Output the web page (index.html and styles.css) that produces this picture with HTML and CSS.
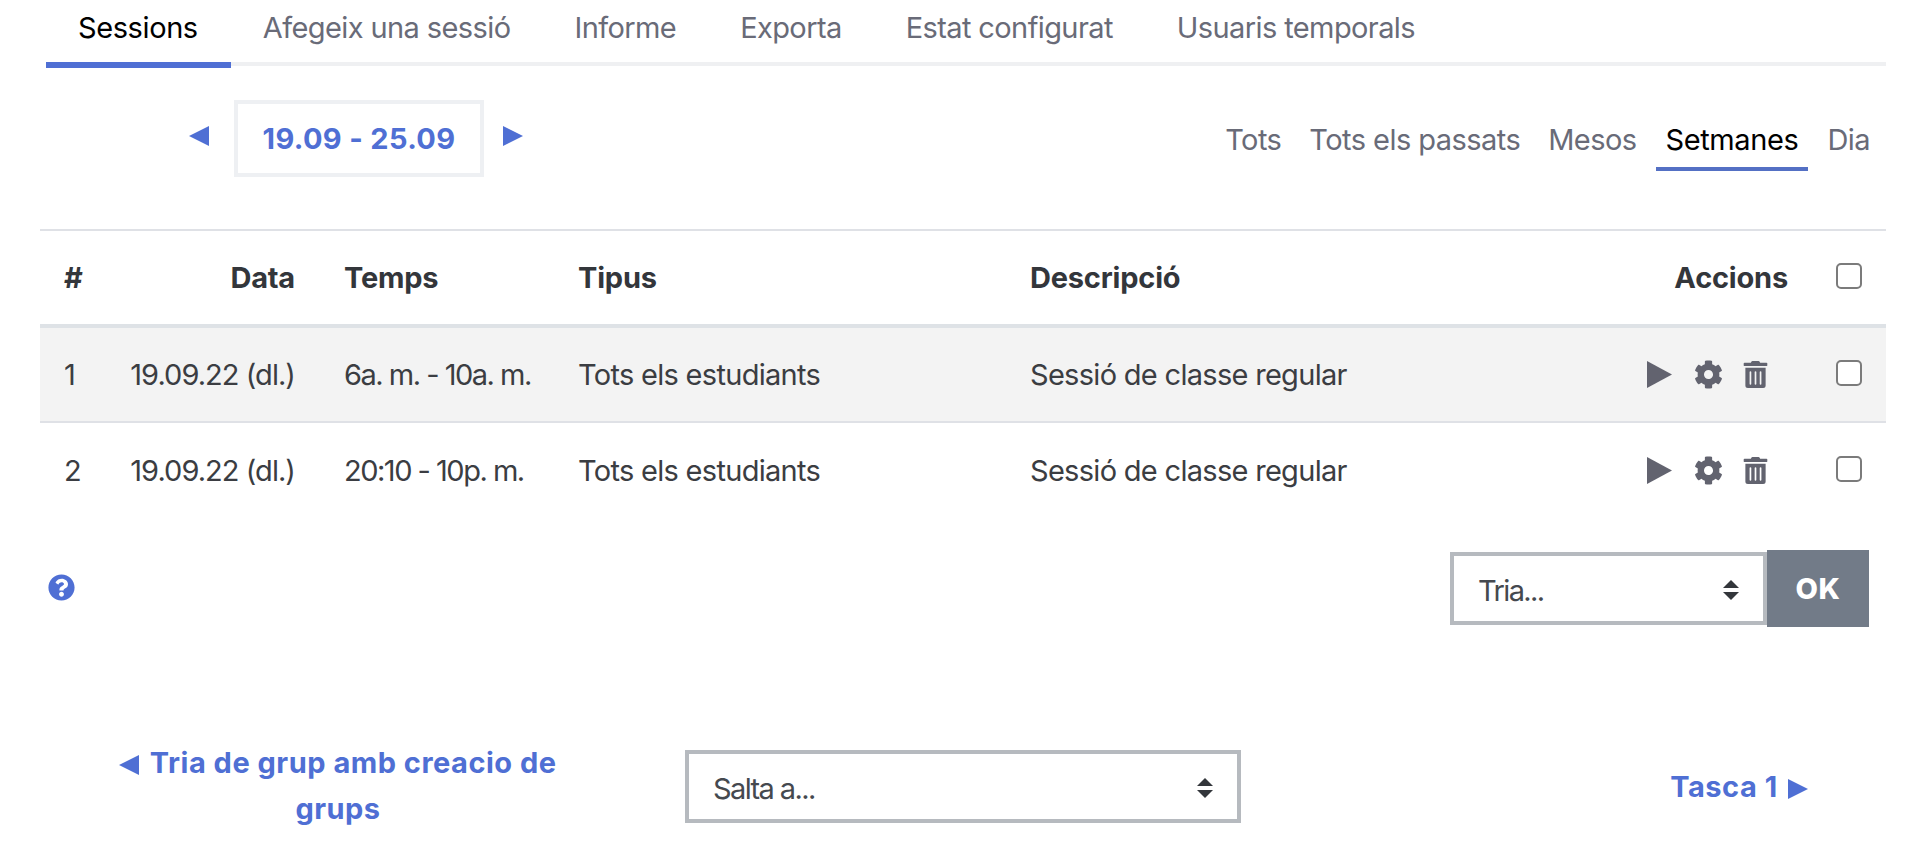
FILE: index.html
```html
<!DOCTYPE html>
<html lang="ca">
<head>
<meta charset="utf-8">
<title>Sessions</title>
<link rel="stylesheet" href="styles.css">
</head>
<body>
<main class="page">
  <nav class="tabs">
    <a class="tab active">Sessions</a>
    <a class="tab">Afegeix una sessió</a>
    <a class="tab">Informe</a>
    <a class="tab">Exporta</a>
    <a class="tab">Estat configurat</a>
    <a class="tab">Usuaris temporals</a>
  </nav>
  <section class="controls">
    <div class="pager">
      <svg class="arrow" viewBox="0 0 20 20"><path d="M20 0V20L0 10Z"/></svg>
      <div class="range">19.09 - 25.09</div>
      <svg class="arrow" viewBox="0 0 20 20"><path d="M0 0V20L20 10Z"/></svg>
    </div>
    <div class="views">
      <a class="view">Tots</a>
      <a class="view">Tots els passats</a>
      <a class="view">Mesos</a>
      <a class="view current">Setmanes</a>
      <a class="view">Dia</a>
    </div>
  </section>
  <table class="sessions">
    <thead>
      <tr>
        <th class="c-num">#</th>
        <th class="c-date">Data</th>
        <th class="c-time">Temps</th>
        <th class="c-type">Tipus</th>
        <th class="c-desc">Descripció</th>
        <th class="c-act">Accions</th>
        <th class="c-check"><span class="box"></span></th>
      </tr>
    </thead>
    <tbody>
      <tr class="odd">
        <td class="c-num">1</td>
        <td class="c-date">19.09.22 (dl.)</td>
        <td class="c-time">6a. m. - 10a. m.</td>
        <td class="c-type">Tots els estudiants</td>
        <td class="c-desc">Sessió de classe regular</td>
        <td class="c-act"><div class="icons">
          <svg class="i-play" viewBox="0 0 25 27"><path d="M0 0L25 13.5L0 27Z"/></svg>
          <svg class="i-gear" viewBox="0 0 512 512"><path d="M487.4 315.7l-42.6-24.6c4.300-23.200 4.300-47 0-70.200l42.600-24.600c4.900-2.800 7.100-8.600 5.500-14-11.100-35.600-30-67.800-54.700-94.600-3.800-4.100-10-5.100-14.800-2.300L380.800 110c-17.900-15.400-38.500-27.300-60.800-35.100V25.800c0-5.600-3.900-10.500-9.400-11.700-36.700-8.200-74.300-7.800-109.200 0-5.500 1.200-9.400 6.100-9.400 11.700V75c-22.200 7.900-42.800 19.800-60.800 35.100L88.700 85.500c-4.900-2.800-11-1.900-14.800 2.300-24.700 26.700-43.600 58.900-54.700 94.600-1.700 5.400.600 11.200 5.500 14L67.300 221c-4.300 23.200-4.300 47 0 70.200l-42.600 24.600c-4.900 2.800-7.100 8.600-5.500 14 11.100 35.600 30 67.800 54.700 94.600 3.800 4.100 10 5.100 14.800 2.300l42.600-24.600c17.900 15.400 38.500 27.300 60.800 35.100v49.200c0 5.600 3.900 10.500 9.400 11.700 36.700 8.200 74.300 7.800 109.200 0 5.500-1.200 9.400-6.100 9.400-11.700v-49.200c22.200-7.900 42.800-19.800 60.800-35.100l42.600 24.600c4.900 2.800 11 1.900 14.800-2.300 24.700-26.700 43.600-58.900 54.700-94.600 1.500-5.500-.7-11.300-5.600-14.100zM256 336c-44.100 0-80-35.900-80-80s35.900-80 80-80 80 35.900 80 80-35.900 80-80 80z"/></svg>
          <svg class="i-trash" viewBox="0 0 448 512"><path d="M32 464a48 48 0 0 0 48 48h288a48 48 0 0 0 48-48V128H32zm272-256a16 16 0 0 1 32 0v224a16 16 0 0 1-32 0zm-96 0a16 16 0 0 1 32 0v224a16 16 0 0 1-32 0zm-96 0a16 16 0 0 1 32 0v224a16 16 0 0 1-32 0zM432 32H312l-9.400-18.700A24 24 0 0 0 281.100 0H166.800a23.700 23.700 0 0 0-21.400 13.300L136 32H16A16 16 0 0 0 0 48v32a16 16 0 0 0 16 16h416a16 16 0 0 0 16-16V48a16 16 0 0 0-16-16z"/></svg>
        </div></td>
        <td class="c-check"><span class="box"></span></td>
      </tr>
      <tr>
        <td class="c-num">2</td>
        <td class="c-date">19.09.22 (dl.)</td>
        <td class="c-time">20:10 - 10p. m.</td>
        <td class="c-type">Tots els estudiants</td>
        <td class="c-desc">Sessió de classe regular</td>
        <td class="c-act"><div class="icons">
          <svg class="i-play" viewBox="0 0 25 27"><path d="M0 0L25 13.500L0 27Z"/></svg>
          <svg class="i-gear" viewBox="0 0 512 512"><path d="M487.4 315.7l-42.6-24.6c4.300-23.200 4.300-47 0-70.200l42.600-24.600c4.900-2.800 7.100-8.600 5.500-14-11.100-35.600-30-67.800-54.700-94.600-3.800-4.100-10-5.100-14.800-2.300L380.800 110c-17.900-15.400-38.500-27.300-60.800-35.100V25.800c0-5.600-3.900-10.500-9.400-11.700-36.700-8.200-74.300-7.800-109.200 0-5.500 1.200-9.400 6.100-9.400 11.700V75c-22.200 7.900-42.800 19.800-60.800 35.100L88.700 85.500c-4.900-2.800-11-1.900-14.800 2.300-24.700 26.700-43.600 58.900-54.700 94.600-1.700 5.400.600 11.200 5.500 14L67.300 221c-4.300 23.200-4.300 47 0 70.200l-42.600 24.600c-4.900 2.800-7.100 8.600-5.500 14 11.100 35.600 30 67.800 54.700 94.600 3.800 4.100 10 5.100 14.800 2.300l42.600-24.600c17.900 15.400 38.500 27.300 60.800 35.100v49.200c0 5.600 3.900 10.500 9.400 11.700 36.700 8.200 74.300 7.800 109.200 0 5.500-1.200 9.400-6.100 9.400-11.700v-49.200c22.200-7.900 42.800-19.800 60.800-35.100l42.600 24.600c4.900 2.800 11 1.900 14.800-2.300 24.700-26.700 43.600-58.900 54.700-94.600 1.500-5.500-.7-11.300-5.600-14.100zM256 336c-44.100 0-80-35.900-80-80s35.900-80 80-80 80 35.900 80 80-35.900 80-80 80z"/></svg>
          <svg class="i-trash" viewBox="0 0 448 512"><path d="M32 464a48 48 0 0 0 48 48h288a48 48 0 0 0 48-48V128H32zm272-256a16 16 0 0 1 32 0v224a16 16 0 0 1-32 0zm-96 0a16 16 0 0 1 32 0v224a16 16 0 0 1-32 0zm-96 0a16 16 0 0 1 32 0v224a16 16 0 0 1-32 0zM432 32H312l-9.400-18.700A24 24 0 0 0 281.100 0H166.800a23.700 23.700 0 0 0-21.400 13.300L136 32H16A16 16 0 0 0 0 48v32a16 16 0 0 0 16 16h416a16 16 0 0 0 16-16V48a16 16 0 0 0-16-16z"/></svg>
        </div></td>
        <td class="c-check"><span class="box"></span></td>
      </tr>
    </tbody>
  </table>
  <section class="bulk">
    <svg class="help" viewBox="0 0 512 512"><path d="M504 256c0 137-111 248-248 248S8 393 8 256 119 8 256 8s248 111 248 248zM262.700 90c-54.500 0-89.300 23-116.500 63.800-3.500 5.300-2.400 12.400 2.700 16.300l34.700 26.300c5.200 3.900 12.600 3 16.700-2.100 17.900-22.700 30.100-35.800 57.300-35.800 20.400 0 45.700 13.100 45.700 33 0 15-12.400 22.700-32.600 34-23.600 13.200-54.800 29.700-54.800 70.900V302c0 6.600 5.400 12 12 12h56c6.600 0 12-5.400 12-12v-1.300c0-28.500 83.400-29.700 83.400-106.900 0-58.100-60.300-102-116.900-102zM256 338c-25.400 0-46 20.600-46 46 0 25.400 20.600 46 46 46s46-20.600 46-46c0-25.400-20.600-46-46-46z"/></svg>
    <div class="bulk-form">
      <div class="select small">Tria...<svg class="updown" viewBox="0 0 16 20"><path d="M8 0L16 8H0ZM8 20L0 12H16Z"/></svg></div>
      <div class="ok">OK</div>
    </div>
  </section>
  <footer class="jump">
    <a class="jump-prev"><svg class="link-arrow back" viewBox="0 0 20 20"><path d="M20 0V20L0 10Z"/></svg> Tria de grup amb creacio de grups</a>
    <div class="select wide">Salta a...<svg class="updown" viewBox="0 0 16 20"><path d="M8 0L16 8H0ZM8 20L0 12H16Z"/></svg></div>
    <a class="jump-next">Tasca 1 <svg class="link-arrow next" viewBox="0 0 20 20"><path d="M0 0V20L20 10Z"/></svg></a>
  </footer>
</main>
</body>
</html>
```
FILE: styles.css
```css
* { box-sizing: border-box; }
html, body { margin: 0; height: 850px; overflow: hidden; background: #fff; }
body { font-family: Inter, "Liberation Sans", Arial, sans-serif; font-size: 29px; letter-spacing: -0.7px; color: #3b3d42; }
.page { padding: 0 30px 0 40px; }

.tabs { display: flex; height: 66px; margin-left: 6px; border-bottom: 4px solid #eff0f2; }
.tab { height: 68px; padding: 10px 32px 0; line-height: 36px; color: #696b78; white-space: nowrap; letter-spacing: -0.6px; }
.tab.active { color: #000; border-bottom: 6px solid #4f6fd4; padding-right: 33px; letter-spacing: -0.4px; }

.controls { display: flex; justify-content: space-between; height: 163px; }
.pager { display: flex; align-items: flex-start; margin: 34px 0 0 149px; }
.arrow { width: 20px; height: 20px; margin-top: 26px; fill: #4f6fd4; }
.range { width: 250px; height: 77px; margin: 0 19px 0 25px; border: 4px solid #eef0f3; color: #4f6fd4; font-weight: 700; text-align: center; line-height: 69px; letter-spacing: 0.35px; }
.views { display: flex; align-items: flex-start; margin-top: 52px; margin-right: 7px; }
.view { height: 53px; padding: 5px 9px 0; line-height: 34px; color: #696b78; white-space: nowrap; letter-spacing: -0.55px; }
.view + .view { margin-left: 10px; }
.view.current { color: #000; border-bottom: 4px solid #5470c4; padding: 5px 10px 0; letter-spacing: -0.4px; }

.sessions { width: 1846px; table-layout: fixed; border-collapse: separate; border-spacing: 0; border-top: 2px solid #dfe1e6; }
.sessions th { height: 97px; padding: 0 0 0 24px; font-weight: 700; letter-spacing: -0.2px; color: #33363b; border-bottom: 4px solid #dee2e6; text-align: left; }
.sessions td { height: 95px; padding: 0 0 0 24px; border-bottom: 2px solid #dfe1e6; white-space: nowrap; }
.sessions tbody tr:last-child td { border-bottom: 0; }
.sessions tr.odd td { background: #f3f3f3; }
.c-num { width: 60px; }
.sessions .c-date { width: 195px; padding-left: 0; text-align: right; }
.sessions .c-time { width: 260px; padding-left: 49px; }
.sessions td.c-date { letter-spacing: -0.95px; }
.sessions td.c-time { letter-spacing: -1.5px; }
.sessions .c-type { width: 451px; padding-left: 23px; }
.c-desc { width: 632px; }
.sessions .c-act { width: 150px; padding-left: 0; text-align: right; }
.sessions .c-check { width: 98px; padding: 0 0 0 48px; }
.box { display: block; width: 26px; height: 26px; border: 2px solid #7b7b7b; border-radius: 5px; background: #fff; margin-top: -3px; }
.icons { display: flex; align-items: center; gap: 21px; height: 27px; justify-content: flex-end; margin: 0 20px 0 0; }
.icons svg { fill: #62636f; height: 27px; display: block; }
.i-play { width: 25px; margin-right: 2px; }
.icons .i-gear { width: 29px; height: 29px; margin: -1px; }
.i-trash { width: 25px; }

.bulk { display: flex; justify-content: space-between; margin-top: 32px; padding-right: 17px; }
.help { width: 27px; height: 27px; margin: 24px 0 0 8px; fill: #4f6fd4; }
.bulk-form { display: flex; align-items: center; }
.select { position: relative; height: 73px; border: 4px solid #b6babf; padding-left: 24px; line-height: 69px; color: #45494f; background: #fff; letter-spacing: -1.6px; }
.select.small { width: 317px; }
.select.wide { width: 556px; }
.updown { position: absolute; top: 24px; right: 24px; width: 16px; height: 20px; fill: #33363b; }
.ok { width: 102px; height: 77px; background: #727b88; color: #fff; font-weight: 800; text-align: center; line-height: 77px; letter-spacing: 0.5px; }

.jump { display: grid; grid-template-columns: 645px 556px 1fr; align-items: center; margin-top: 113px; }
.jump-prev { color: #4f6fd4; font-weight: 700; text-align: center; line-height: 46px; padding: 0 107px 0 58px; letter-spacing: 0.5px; }
.jump-next { color: #4f6fd4; font-weight: 700; text-align: right; padding-right: 78px; letter-spacing: 0.5px; }
.link-arrow { width: 20px; height: 20px; fill: #4f6fd4; vertical-align: -2px; }
.link-arrow.back { margin-right: 3px; }
.link-arrow.next { margin-left: 3px; }
```
